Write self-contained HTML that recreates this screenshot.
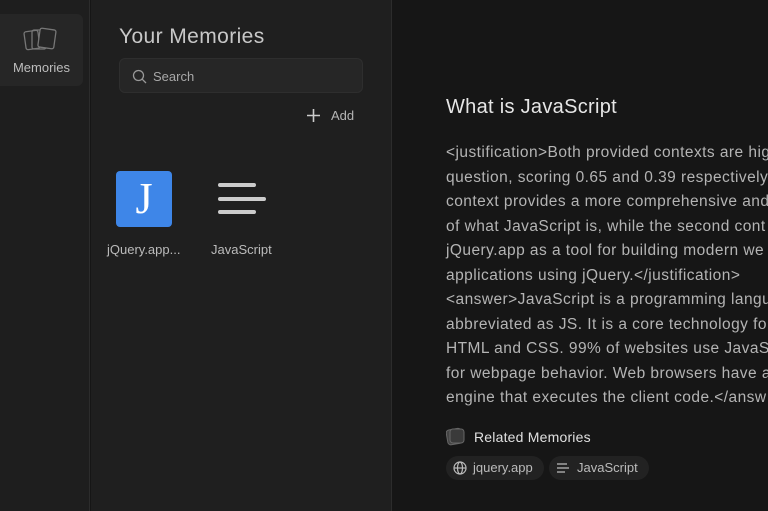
<!DOCTYPE html>
<html><head><style>
*{margin:0;padding:0;box-sizing:border-box}
body{width:768px;height:511px;overflow:hidden;background:#161616;font-family:"Liberation Sans",sans-serif;position:relative}
.side{position:absolute;left:0;top:0;width:90px;height:511px;background:#1e1e1e;border-right:1px solid #2c2c2c}
.memb{position:absolute;left:0;top:14px;width:83px;height:72px;background:#262626;border-radius:0 6px 6px 0}
.memb span{position:absolute;top:46px;left:0;width:83px;text-align:center;color:#bdbdbd;font-size:13px}
.mid{position:absolute;left:91px;top:0;width:301px;height:511px;background:#1f1f1f;border-right:1px solid #2c2c2c}
.title{position:absolute;left:28px;top:25px;color:#c8c8c8;font-size:21px;letter-spacing:0.4px}
.search{position:absolute;left:28px;top:58px;width:244px;height:35px;background:#262626;border-radius:6px;border:1px solid #2e2e2e}
.search span{position:absolute;left:33px;top:10px;color:#a8a8a8;font-size:13px}
.add{position:absolute;left:216px;top:108px;color:#b5b5b5;font-size:13px}
.jq{position:absolute;left:25px;top:171px;width:56px;height:56px;background:#3e86e8;border-radius:4px;color:#fff;font-family:"Liberation Serif",serif;font-size:44px;text-align:center;line-height:56px}
.lbl{position:absolute;top:242px;color:#bbb;font-size:13px}
.main{position:absolute;left:446px;top:0;width:330px;color:#b4b4b4}
.h{position:absolute;top:96px;font-size:20px;color:#e6e6e6;white-space:nowrap;letter-spacing:0.3px}
.p{position:absolute;top:141px;font-size:15.5px;line-height:24.5px;white-space:nowrap;letter-spacing:0.45px}
.rel{position:absolute;top:429px;left:28px;font-size:14px;color:#e0e0e0;white-space:nowrap;letter-spacing:0.2px}
.chip{position:absolute;top:456px;height:24px;background:#222;border-radius:12px;font-size:13px;color:#bbb;line-height:24px;white-space:nowrap}
</style></head><body>
<div class="side"><div class="memb">
<svg style="position:absolute;left:23px;top:13px" width="38" height="26" viewBox="0 0 38 26" fill="none" stroke="#777" stroke-width="1.3"><rect x="2" y="4" width="14" height="18" rx="2" transform="rotate(-8 9 13)"/><rect x="9" y="3" width="14" height="19" rx="2"/><rect x="16" y="2" width="16" height="19" rx="2" fill="#262626" transform="rotate(8 24 11)"/></svg>
<span>Memories</span></div></div>
<div class="mid">
<div class="title">Your Memories</div>
<div class="search"><svg style="position:absolute;left:12px;top:10px" width="15" height="15" viewBox="0 0 15 15" fill="none" stroke="#999" stroke-width="1.3"><circle cx="6.5" cy="6.5" r="5"/><path d="M10.3 10.3 14 14"/></svg><span>Search</span></div>
<svg style="position:absolute;left:216px;top:109px" width="13" height="13" stroke="#ccc" stroke-width="1.6"><path d="M6.5 0v13M0 6.5h13"/></svg>
<div class="add" style="left:240px">Add</div>
<div class="jq">J</div>
<svg style="position:absolute;left:127px;top:182px" width="48" height="34" stroke="#ccc" stroke-width="4" stroke-linecap="round"><path d="M2 3h34M2 17h44M2 30h34"/></svg>
<div class="lbl" style="left:16px">jQuery.app...</div>
<div class="lbl" style="left:120px">JavaScript</div>
</div>
<div class="main">
<div class="h">What is JavaScript</div>
<div class="p">&lt;justification&gt;Both provided contexts are hig<br>question, scoring 0.65 and 0.39 respectively<br>context provides a more comprehensive and<br>of what JavaScript is, while the second cont<br>jQuery.app as a tool for building modern we<br>applications using jQuery.&lt;/justification&gt;<br>&lt;answer&gt;JavaScript is a programming langu<br>abbreviated as JS. It is a core technology fo<br>HTML and CSS. 99% of websites use JavaSc<br>for webpage behavior. Web browsers have a<br>engine that executes the client code.&lt;/answ</div>
<svg style="position:absolute;left:0;top:427px" width="20" height="19" fill="#444" stroke="#666"><rect x="1" y="2" width="15" height="15" rx="3" transform="rotate(-10 9 10)"/><rect x="4" y="2" width="14" height="14" rx="3" fill="#3a3a3a"/></svg>
<div class="rel">Related Memories</div>
<div class="chip" style="left:0;width:98px"><svg style="position:absolute;left:7px;top:5px" width="14" height="14" fill="none" stroke="#bbb" stroke-width="1.2"><circle cx="7" cy="7" r="6"/><ellipse cx="7" cy="7" rx="2.5" ry="6"/><path d="M1 7h12"/></svg><span style="position:absolute;left:27px">jquery.app</span></div>
<div class="chip" style="left:103px;width:100px"><svg style="position:absolute;left:8px;top:7px" width="12" height="10" stroke="#bbb" stroke-width="1.3"><path d="M0 1h10M0 5h12M0 9h8"/></svg><span style="position:absolute;left:28px">JavaScript</span></div>
</div>
</body></html>
